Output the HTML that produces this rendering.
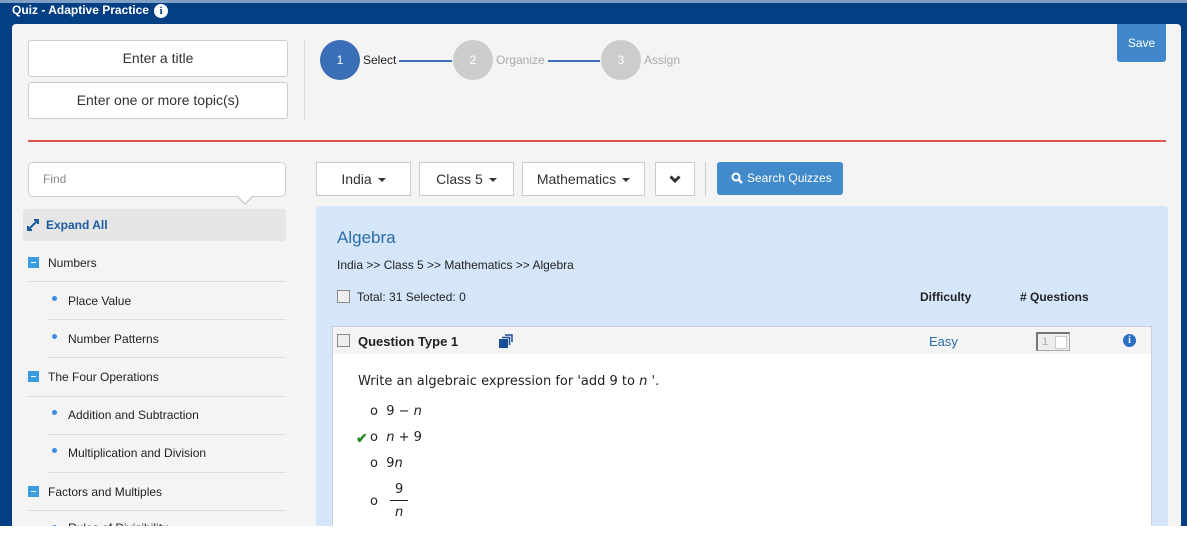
<!DOCTYPE html>
<html><head><style>
*{box-sizing:border-box;margin:0;padding:0}
body{width:1187px;height:546px;background:#fff;font-family:"Liberation Sans",sans-serif;position:relative;overflow:hidden}
.clip{position:absolute;left:0;top:0;width:1187px;height:526px;overflow:hidden;background:#043f84}
.a{position:absolute}
.panel{position:absolute;left:12px;top:24px;width:1169px;height:520px;background:#f4f4f4;border-radius:4px}
.inp{position:absolute;background:#fff;border:1px solid #ccc;border-radius:3px;text-align:center;font-size:14px;color:#333}
.step{position:absolute;width:40px;height:40px;border-radius:50%;color:#fff;font-size:12px;text-align:center;line-height:40px}
.sel{position:absolute;top:162px;height:34px;background:#fff;border:1px solid #ccc;font-size:14px;color:#333;text-align:center;line-height:32px}
.car{display:inline-block;border-left:4px solid transparent;border-right:4px solid transparent;border-top:4px solid #333;vertical-align:middle;margin-left:6px}
.tree{position:absolute;font-size:12px;color:#222}
.hr{position:absolute;height:1px;background:#ddd}
.minus{position:absolute;width:11px;height:11px;background:#3a9de0}
.minus:after{content:"";position:absolute;left:3px;top:5px;width:5px;height:1px;background:#fff}
.dot{position:absolute;width:5px;height:5px;border-radius:50%;background:#3a8ee6}
.m{font-family:"DejaVu Sans",sans-serif;font-size:13px;color:#222;position:absolute}
</style></head><body>
<div class="clip">
<div class="a" style="left:0;top:0;width:1187px;height:3px;background:#7f9fc4"></div>
<div class="a" style="left:12px;top:3px;color:#fff;font-size:12px;font-weight:bold">Quiz - Adaptive Practice</div>
<div class="a" style="left:154px;top:4px;width:14px;height:14px;border-radius:50%;background:#fff;color:#043f84;font:bold 11px 'Liberation Serif',serif;text-align:center;line-height:14px">i</div>
<div class="panel"></div>
<div class="inp" style="left:28px;top:40px;width:260px;height:37px;line-height:35px">Enter a title</div>
<div class="inp" style="left:28px;top:82px;width:260px;height:37px;line-height:35px">Enter one or more topic(s)</div>
<div class="a" style="left:304px;top:40px;width:1px;height:80px;background:#ddd"></div>
<div class="step" style="left:320px;top:40px;background:#3a6fb7">1</div>
<div class="a" style="left:363px;top:53px;font-size:12px;color:#222">Select</div>
<div class="a" style="left:399px;top:60px;width:53px;height:2px;background:#3a6fb7"></div>
<div class="step" style="left:453px;top:40px;background:#ccc">2</div>
<div class="a" style="left:496px;top:53px;font-size:12px;color:#aaa">Organize</div>
<div class="a" style="left:548px;top:60px;width:52px;height:2px;background:#3a6fb7"></div>
<div class="step" style="left:601px;top:40px;background:#ccc">3</div>
<div class="a" style="left:644px;top:53px;font-size:12px;color:#aaa">Assign</div>
<div class="a" style="left:1117px;top:24px;width:49px;height:38px;background:#3f86cb;border-radius:0 0 3px 3px;color:#fff;font-size:12px;text-align:center;line-height:38px">Save</div>
<div class="a" style="left:28px;top:140px;width:1138px;height:2px;background:#d9534f"></div>

<div class="a" style="left:28px;top:162px;width:258px;height:35px;background:#fff;border:1px solid #ccc;border-radius:5px;font-size:12px;color:#888;padding:9px 14px">Find</div>
<div class="a" style="left:236px;top:196px;width:0;height:0;border-left:9px solid transparent;border-right:9px solid transparent;border-top:9px solid #ccc"></div>
<div class="a" style="left:237px;top:195px;width:0;height:0;border-left:8px solid transparent;border-right:8px solid transparent;border-top:8px solid #fff"></div>
<div class="a" style="left:23px;top:209px;width:263px;height:32px;background:#e6e6e6;border-radius:3px"></div>
<svg class="a" style="left:27px;top:219px" width="12" height="12" viewBox="0 0 12 12"><path d="M1 11L11 1M7 1h4v4M1 7v4h4" stroke="#1a5a9e" stroke-width="2" fill="none"/></svg>
<div class="tree" style="left:46px;top:218px;color:#1a5a9e;font-weight:bold">Expand All</div>
<div class="minus" style="left:28px;top:257px"></div><div class="tree" style="left:48px;top:256px">Numbers</div>
<div class="hr" style="left:28px;top:281px;width:258px"></div>
<div class="dot" style="left:52px;top:296px"></div><div class="tree" style="left:68px;top:294px">Place Value</div>
<div class="hr" style="left:48px;top:319px;width:238px"></div>
<div class="dot" style="left:52px;top:334px"></div><div class="tree" style="left:68px;top:332px">Number Patterns</div>
<div class="hr" style="left:48px;top:357px;width:238px"></div>
<div class="minus" style="left:28px;top:371px"></div><div class="tree" style="left:48px;top:370px">The Four Operations</div>
<div class="hr" style="left:28px;top:396px;width:258px"></div>
<div class="dot" style="left:52px;top:410px"></div><div class="tree" style="left:68px;top:408px">Addition and Subtraction</div>
<div class="hr" style="left:48px;top:434px;width:238px"></div>
<div class="dot" style="left:52px;top:448px"></div><div class="tree" style="left:68px;top:446px">Multiplication and Division</div>
<div class="hr" style="left:48px;top:472px;width:238px"></div>
<div class="minus" style="left:28px;top:486px"></div><div class="tree" style="left:48px;top:485px">Factors and Multiples</div>
<div class="hr" style="left:28px;top:510px;width:258px"></div>
<div class="dot" style="left:52px;top:525px"></div><div class="tree" style="left:68px;top:521px">Rules of Divisibility</div>

<div class="sel" style="left:316px;width:95px">India<span class="car"></span></div>
<div class="sel" style="left:419px;width:95px">Class 5<span class="car"></span></div>
<div class="sel" style="left:522px;width:123px">Mathematics<span class="car"></span></div>
<div class="sel" style="left:655px;width:40px"></div>
<svg class="a" style="left:669px;top:175px" width="12" height="9" viewBox="0 0 12 9"><path d="M1.5 1.5L6 6l4.5-4.5" stroke="#333" stroke-width="3" fill="none"/></svg>
<div class="a" style="left:705px;top:162px;width:1px;height:34px;background:#ccc"></div>
<div class="a" style="left:717px;top:162px;width:126px;height:33px;background:#428bca;border-radius:3px;color:#fff;font-size:12px;line-height:33px;padding-left:30px">Search Quizzes</div>
<svg class="a" style="left:731px;top:172px" width="12" height="12" viewBox="0 0 12 12"><circle cx="5" cy="5" r="3.5" stroke="#fff" stroke-width="2" fill="none"/><path d="M7.5 7.5L11 11" stroke="#fff" stroke-width="2.5"/></svg>

<div class="a" style="left:316px;top:206px;width:852px;height:340px;background:#d5e6fa;border-radius:4px"></div>
<div class="a" style="left:337px;top:228px;font-size:17px;color:#2a6ea8">Algebra</div>
<div class="a" style="left:337px;top:258px;font-size:12px;color:#222">India &gt;&gt; Class 5 &gt;&gt; Mathematics &gt;&gt; Algebra</div>
<div class="a" style="left:337px;top:290px;width:13px;height:13px;background:#eee;border:1px solid #888"></div>
<div class="a" style="left:357px;top:290px;font-size:12px;color:#222">Total: 31 Selected: 0</div>
<div class="a" style="left:920px;top:290px;font-size:12px;font-weight:bold;color:#222">Difficulty</div>
<div class="a" style="left:1020px;top:290px;font-size:12px;font-weight:bold;color:#222"># Questions</div>

<div class="a" style="left:332px;top:326px;width:820px;height:220px;background:#fff;border:1px solid #ccd"></div>
<div class="a" style="left:333px;top:327px;width:818px;height:27px;background:#f4f4f4"></div>
<div class="a" style="left:337px;top:334px;width:13px;height:13px;background:#eee;border:1px solid #888"></div>
<div class="a" style="left:358px;top:334px;font-size:13px;font-weight:bold;color:#222">Question Type 1</div>
<svg class="a" style="left:498px;top:333px" width="16" height="16" viewBox="0 0 16 16"><rect x="1" y="6" width="9" height="9" fill="#1a4d95"/><path d="M4 4.5h7.5V12M7 2h7v7" stroke="#1a4d95" stroke-width="1.5" fill="none"/></svg>
<div class="a" style="left:929px;top:334px;font-size:13px;color:#2a6ea8">Easy</div>
<div class="a" style="left:1036px;top:332px;width:34px;height:19px;border:1px solid #aaa;border-top:2px solid #777;border-left:2px solid #777;background:#eee;font-size:11px;color:#aaa;padding-left:4px;line-height:16px">1<span style="position:absolute;right:2px;top:2px;width:12px;height:13px;background:#fff;border:1px solid #ccc"></span></div>
<div class="a" style="left:1123px;top:334px;width:13px;height:13px;border-radius:50%;background:#2a6ec5;color:#fff;font:bold 10px 'Liberation Serif',serif;text-align:center;line-height:13px">i</div>

<div class="m" style="left:358px;top:374px">Write an algebraic expression for 'add 9 to <i>n</i> '.</div>
<div class="m" style="left:370px;top:404px">o&nbsp; 9 − <i>n</i></div>
<div class="a" style="left:356px;top:430px;color:#2a8a2a;font-size:14px;font-weight:bold">&#x2714;</div>
<div class="m" style="left:370px;top:430px">o&nbsp; <i>n</i> + 9</div>
<div class="m" style="left:370px;top:456px">o&nbsp; 9<i>n</i></div>
<div class="m" style="left:370px;top:494px">o</div>
<div class="m" style="left:395px;top:482px">9</div>
<div class="a" style="left:390px;top:500px;width:18px;height:1px;background:#222"></div>
<div class="m" style="left:395px;top:505px"><i>n</i></div>
</div>
</body></html>
